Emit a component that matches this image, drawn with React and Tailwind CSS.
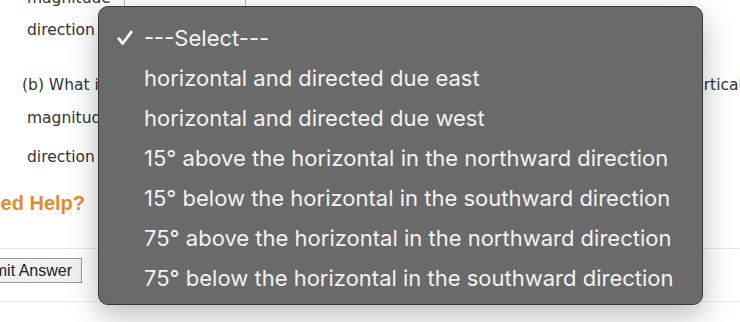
import React from "react";

const options = [
  "---Select---",
  "horizontal and directed due east",
  "horizontal and directed due west",
  "15° above the horizontal in the northward direction",
  "15° below the horizontal in the southward direction",
  "75° above the horizontal in the northward direction",
  "75° below the horizontal in the southward direction",
];

function Check() {
  return (
    <svg width="16" height="16" viewBox="0 0 14 14" className="shrink-0">
      <path d="M1.6 7.6 L5 11.8 L12.4 1.8" fill="none" stroke="#f6f6f6" strokeWidth="2.5" strokeLinecap="round" strokeLinejoin="round" />
    </svg>
  );
}

export default function App() {
  return (
    <div className="relative w-[740px] h-[322px] overflow-hidden bg-white" style={{ fontFamily: "'DejaVu Sans', Verdana, sans-serif" }}>
      {/* page behind the menu */}
      <div className="flex flex-col text-[15.5px] text-[#333]">
        <div className="flex h-[20px] -mt-[12px] leading-[20px]">
          <span className="pl-[27px] w-[124px]">magnitude</span>
          <div className="w-[122px] h-[34px] border border-[#bbb]" />
        </div>
        <div className="pl-[27px] mt-[12px] leading-[20px]">direction</div>
        <div className="flex mt-[35px] leading-[20px] whitespace-nowrap">
          <span className="pl-[22px] w-[685px] shrink-0 overflow-hidden">(b) What is the</span>
          <span className="shrink-0">vertical</span>
        </div>
        <div className="pl-[27px] mt-[13px] leading-[20px]">magnitude</div>
        <div className="pl-[27px] mt-[19px] leading-[20px]">direction</div>
        <div className="-ml-[25px] mt-[25px] text-[20px] font-bold text-[#e58a2e] leading-[22px] whitespace-nowrap" style={{ fontFamily: "Arial, 'Liberation Sans', sans-serif" }}>
          Need Help?
        </div>
        <div className="mt-[34px] h-px bg-[#e6e6e6]" />
        <div className="mt-[9px] flex">
          <button className="-ml-[46px] w-[128px] h-[25px] border border-[#9a9a9a] bg-[#f0f0f0] text-[16px] text-[#222] text-right pr-[9px] leading-[22px] whitespace-nowrap" style={{ fontFamily: "Arial, 'Liberation Sans', sans-serif" }}>
            Submit Answer
          </button>
        </div>
        <div className="mt-[18px] h-px bg-[#ececec]" />
      </div>

      {/* open select menu */}
      <div
        className="absolute left-[98px] top-[6px] w-[605px] h-[299px] rounded-[10px] border border-[#3a3a3a] bg-[#6b6a6a] py-[11px] shadow-[0_10px_30px_rgba(0,0,0,0.28)]"
        style={{ fontFamily: "Inter, 'Noto Sans', sans-serif" }}
      >
        <div className="flex flex-col">
          {options.map((o, i) => (
            <div key={o} className="flex items-center h-[40px] text-[22px] text-[#f2f2f2] whitespace-nowrap">
              <div className="w-[45px] pl-[18px] flex items-center">{i === 0 ? <Check /> : null}</div>
              <span>{o}</span>
            </div>
          ))}
        </div>
      </div>
    </div>
  );
}
